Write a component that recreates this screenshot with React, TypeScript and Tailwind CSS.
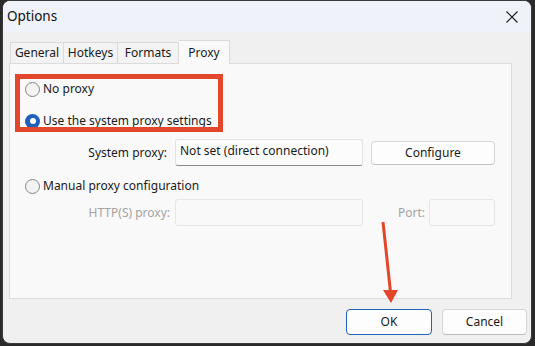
import React from "react";

const font = { fontFamily: '"Noto Sans", "Open Sans", sans-serif' };

function Radio({ checked, label }: { checked?: boolean; label: string }) {
  return (
    <div className="flex items-center h-[20px]">
      {checked ? (
        <div className="w-[15px] h-[15px] rounded-full bg-[#1f5fbd] flex items-center justify-center">
          <div className="w-[6px] h-[6px] rounded-full bg-white" />
        </div>
      ) : (
        <div className="w-[15px] h-[15px] rounded-full border border-[#858585] bg-[#f3f3f3]" />
      )}
      <span className="ml-[3px] text-[12px] text-[#1a1a1a] leading-none">{label}</span>
    </div>
  );
}

export default function App() {
  return (
    <div className="relative w-[535px] h-[346px] bg-[#2a2a2a] pl-[2px] overflow-hidden" style={font}>
      <div className="w-[530px] h-[344px] rounded-[8px] bg-[#f0f0f0] flex flex-col overflow-hidden border border-[#3a3a3a]">
        {/* title bar */}
        <div className="h-[31px] bg-[#eff2f8] flex items-center justify-between pl-[4px] pr-[13px] shrink-0">
          <span className="text-[13.5px] text-[#111] leading-none">Options</span>
          <svg width="12" height="12" viewBox="0 0 12 12">
            <path d="M0.5 0.5 L11.5 11.5 M11.5 0.5 L0.5 11.5" stroke="#1a1a1a" strokeWidth="1.1" />
          </svg>
        </div>
        {/* body */}
        <div className="flex flex-col pt-[8px] pl-[6px]">
          {/* tabs */}
          <div className="flex items-end h-[23px] pl-[1px] relative z-10">
            <div className="h-[21px] w-[54px] border border-b-0 border-[#dadada] bg-[#f3f3f3] flex items-center justify-center text-[12px] text-[#1a1a1a]">General</div>
            <div className="h-[21px] w-[54px] border border-b-0 border-l-0 border-[#dadada] bg-[#f3f3f3] flex items-center justify-center text-[12px] text-[#1a1a1a]">Hotkeys</div>
            <div className="h-[21px] w-[61px] border border-b-0 border-l-0 border-[#dadada] bg-[#f3f3f3] flex items-center justify-center text-[12px] text-[#1a1a1a]">Formats</div>
            <div className="h-[24px] -mb-px w-[51px] border border-b-0 border-l-0 border-[#dadada] bg-[#f9f9f9] flex items-start pt-[3px] justify-center text-[12px] text-[#1a1a1a]">Proxy</div>
          </div>
          {/* panel */}
          <div className="w-[503px] h-[236px] border border-[#dcdcdc] bg-[#f9f9f9] flex flex-col pl-[15px] pt-[15px]">
            <Radio label="No proxy" />
            <div className="h-[12px]" />
            <Radio checked label="Use the system proxy settings" />
            <div className="h-[8px]" />
            <div className="flex items-center">
              <div className="w-[150px] pr-[8px] text-right text-[12px] text-[#1a1a1a]">System proxy:</div>
              <div className="w-[188px] h-[27px] bg-[#fcfcfc] border border-[#e2e2e2] border-b-[#8a8a8a] rounded-[3px] pl-[4px] pt-[3px] text-[12px] text-[#1a1a1a] leading-[16px]">
                Not set (direct connection)
              </div>
              <div className="ml-[8px] w-[124px] h-[24px] bg-[#fdfdfd] border border-[#d6d6d6] border-b-[#c2c2c2] rounded-[4px] flex items-center justify-center text-[12px] text-[#1a1a1a]">
                Configure
              </div>
            </div>
            <div className="h-[10px]" />
            <Radio label="Manual proxy configuration" />
            <div className="h-[3px]" />
            <div className="flex items-center">
              <div className="w-[150px] pr-[5px] text-right text-[12px] text-[#a3a3a3]">HTTP(S) proxy:</div>
              <div className="w-[188px] h-[27px] bg-[#f9f9f9] border border-[#e6e6e6] rounded-[3px]" />
              <div className="w-[66px] pr-[4px] text-right text-[12px] text-[#a3a3a3]">Port:</div>
              <div className="w-[66px] h-[27px] bg-[#f9f9f9] border border-[#e6e6e6] rounded-[3px]" />
            </div>
          </div>
        </div>
        {/* buttons */}
        <div className="flex justify-end gap-[10px] pr-[4px] mt-[10px]">
          <div className="w-[86px] h-[26px] bg-[#fdfdfd] border border-[#1f62bf] rounded-[4px] flex items-center justify-center text-[12px] text-[#1a1a1a]">OK</div>
          <div className="w-[85px] h-[26px] bg-[#fdfdfd] border border-[#d4d4d4] border-b-[#bcbcbc] rounded-[4px] flex items-center justify-center text-[12px] text-[#1a1a1a]">Cancel</div>
        </div>
      </div>

      {/* annotation: red box */}
      <div className="absolute left-[15px] top-[74px] w-[208px] h-[58px] border-[5px] border-[#e2462b]" />
      {/* annotation: arrow */}
      <svg className="absolute left-0 top-0" width="535" height="346" viewBox="0 0 535 346">
        <path d="M383 222 L390.5 292" stroke="#e2462b" strokeWidth="3" />
        <path d="M383 290 L398 290 L391 303 Z" fill="#e2462b" />
      </svg>
    </div>
  );
}
